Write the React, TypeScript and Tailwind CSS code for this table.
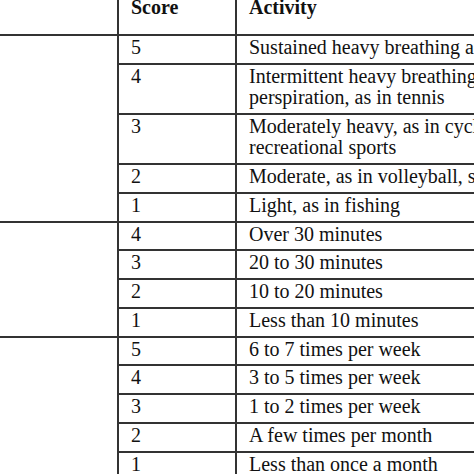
const groups: { score: number; lines: string[] }[][] = [
  [
    { score: 5, lines: ["Sustained heavy breathing and perspiration"] },
    { score: 4, lines: ["Intermittent heavy breathing and", "perspiration, as in tennis"] },
    { score: 3, lines: ["Moderately heavy, as in cycling and", "recreational sports"] },
    { score: 2, lines: ["Moderate, as in volleyball, softball"] },
    { score: 1, lines: ["Light, as in fishing"] },
  ],
  [
    { score: 4, lines: ["Over 30 minutes"] },
    { score: 3, lines: ["20 to 30 minutes"] },
    { score: 2, lines: ["10 to 20 minutes"] },
    { score: 1, lines: ["Less than 10 minutes"] },
  ],
  [
    { score: 5, lines: ["6 to 7 times per week"] },
    { score: 4, lines: ["3 to 5 times per week"] },
    { score: 3, lines: ["1 to 2 times per week"] },
    { score: 2, lines: ["A few times per month"] },
    { score: 1, lines: ["Less than once a month"] },
  ],
];

export default function App() {
  return (
    <div className="w-[474px] h-[474px] overflow-hidden bg-white text-[#111] font-['Liberation_Serif','Times_New_Roman',serif] text-[20px] leading-[21px]">
      <div className="-mt-[4px]">
        {/* header */}
        <div className="flex h-[38px]">
          <div className="w-[119px] shrink-0 border-r-2 border-[#333]" />
          <div className="w-[118px] shrink-0 border-r-2 border-[#333] pl-[12px] pt-[1px] font-bold">Score</div>
          <div className="flex-1 pl-[12px] pt-[1px] font-bold whitespace-nowrap">Activity</div>
        </div>

        {groups.map((rows, g) => (
          <div key={g} className="flex border-t-2 border-[#333]">
            <div className="w-[119px] shrink-0 border-r-2 border-[#333]" />
            <div className="flex flex-1 flex-col min-w-0">
              {rows.map((row, i) => {
                // first row of the later groups sits a pixel tighter
                const pad = g > 0 && i === 0 ? "pb-[4px]" : "pb-[5px]";
                return (
                  <div key={i} className={i > 0 ? "flex border-t-2 border-[#333]" : "flex"}>
                    <div className={`w-[118px] shrink-0 border-r-2 border-[#333] pl-[12px] pt-[1px] ${pad}`}>
                      {row.score}
                    </div>
                    <div className={`flex-1 min-w-0 pl-[12px] pt-[1px] whitespace-nowrap overflow-hidden ${pad}`}>
                      {row.lines.map((l, j) => (
                        <div key={j}>{l}</div>
                      ))}
                    </div>
                  </div>
                );
              })}
            </div>
          </div>
        ))}
      </div>
    </div>
  );
}
